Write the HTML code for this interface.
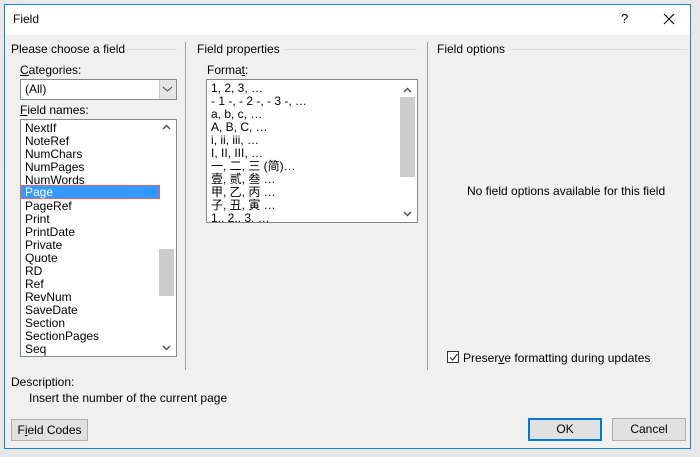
<!DOCTYPE html><html><head><style>
*{margin:0;padding:0;box-sizing:border-box}
body{width:700px;height:457px;background:#e8e8e8;position:relative;overflow:hidden;font-family:"Liberation Sans","Noto Sans CJK SC",sans-serif;font-size:12px;color:#000}
.a{position:absolute;white-space:nowrap}
.win{position:absolute;left:4px;top:4px;width:687px;height:445px;background:#f0f0f0;border:1px solid #1883d7}
.tb{position:absolute;left:5px;top:5px;width:685px;height:30px;background:#fff}
.line{position:absolute;height:1px;background:#dcdcdc}
.vl{position:absolute;width:1px;background:#a0a0a0}
.box{position:absolute;background:#fff;border:1px solid #828790}
.it{position:absolute;left:4px;line-height:13px}
.sb{position:absolute;background:#cdcdcd}
.btn{position:absolute;background:#e1e1e1;border:1px solid #adadad;text-align:center;line-height:20px}
</style></head><body>
<div class="win"></div>
<div class="tb"></div>
<div class="a" style="left:13px;top:12px;font-size:12px">Field</div>
<div class="a" style="left:621px;top:11px;font-size:13px">?</div>
<svg class="a" style="left:663px;top:13px" width="12" height="12"><path d="M1 1L11 11M11 1L1 11" stroke="#000" stroke-width="1.1"/></svg>

<div class="a" style="left:11px;top:42px">Please choose a field</div>
<div class="line" style="left:124px;top:49px;width:53px"></div>
<div class="vl" style="left:185px;top:42px;height:328px"></div>
<div class="a" style="left:197px;top:42px">Field properties</div>
<div class="line" style="left:284px;top:49px;width:133px"></div>
<div class="vl" style="left:427px;top:42px;height:328px"></div>
<div class="a" style="left:437px;top:42px">Field options</div>
<div class="line" style="left:510px;top:49px;width:177px"></div>

<div class="a" style="left:20px;top:63px"><u>C</u>ategories:</div>
<div class="box" style="left:20px;top:79px;width:157px;height:21px"><div class="it" style="top:3px">(All)</div></div>
<div class="a" style="left:159px;top:80px;width:17px;height:19px;background:#e5e5e5;border-left:1px solid #ccc"></div>
<svg class="a" style="left:162px;top:85px" width="11" height="8"><path d="M1 2L5.5 6L10 2" stroke="#444" fill="none"/></svg>

<div class="a" style="left:20px;top:103px"><u>F</u>ield names:</div>
<div class="box" style="left:20px;top:119px;width:157px;height:238px;overflow:hidden">
<div class="it" style="top:2px">NextIf</div>
<div class="it" style="top:15px">NoteRef</div>
<div class="it" style="top:28px">NumChars</div>
<div class="it" style="top:41px">NumPages</div>
<div class="it" style="top:54px">NumWords</div>
<div style="position:absolute;left:0;top:65px;width:139px;height:14px;background:#3399ff;border:1px solid #e8616c"></div>
<div class="it" style="top:66px;color:#fff">Page</div>
<div class="it" style="top:80px">PageRef</div>
<div class="it" style="top:93px">Print</div>
<div class="it" style="top:106px">PrintDate</div>
<div class="it" style="top:119px">Private</div>
<div class="it" style="top:132px">Quote</div>
<div class="it" style="top:145px">RD</div>
<div class="it" style="top:158px">Ref</div>
<div class="it" style="top:171px">RevNum</div>
<div class="it" style="top:184px">SaveDate</div>
<div class="it" style="top:197px">Section</div>
<div class="it" style="top:210px">SectionPages</div>
<div class="it" style="top:223px">Seq</div>
<div class="sb" style="left:138px;top:129px;width:15px;height:47px"></div>
<svg style="position:absolute;left:141px;top:4px" width="9" height="6"><path d="M1 5L4.5 1.5L8 5" stroke="#555" fill="none" stroke-width="1.5"/></svg>
<svg style="position:absolute;left:141px;top:225px" width="9" height="6"><path d="M1 1L4.5 4.5L8 1" stroke="#555" fill="none" stroke-width="1.5"/></svg>
</div>

<div class="a" style="left:207px;top:63px">Forma<u>t</u>:</div>
<div class="box" style="left:206px;top:79px;width:212px;height:144px;overflow:hidden">
<div class="it" style="top:2px">1, 2, 3, …</div>
<div class="it" style="top:15px">- 1 -, - 2 -, - 3 -, …</div>
<div class="it" style="top:28px">a, b, c, …</div>
<div class="it" style="top:41px">A, B, C, …</div>
<div class="it" style="top:54px">i, ii, iii, …</div>
<div class="it" style="top:67px">I, II, III, …</div>
<div class="it" style="top:80px">一, 二, 三 (简)…</div>
<div class="it" style="top:93px">壹, 贰, 叁 …</div>
<div class="it" style="top:106px">甲, 乙, 丙 …</div>
<div class="it" style="top:119px">子, 丑, 寅 …</div>
<div class="it" style="top:132px">1., 2., 3. …</div>
<div class="sb" style="left:193px;top:17px;width:15px;height:80px"></div>
<svg style="position:absolute;left:196px;top:7px" width="9" height="6"><path d="M1 5L4.5 1.5L8 5" stroke="#555" fill="none" stroke-width="1.5"/></svg>
<svg style="position:absolute;left:196px;top:131px" width="9" height="6"><path d="M1 1L4.5 4.5L8 1" stroke="#555" fill="none" stroke-width="1.5"/></svg>
</div>

<div class="a" style="left:467px;top:184px">No field options available for this field</div>

<div class="a" style="left:447px;top:351px;width:12px;height:12px;border:1px solid #333;background:#fff"></div>
<svg class="a" style="left:448px;top:352px" width="11" height="11"><path d="M2 5.5L4.5 8L9.5 2" stroke="#333" fill="none" stroke-width="1.2"/></svg>
<div class="a" style="left:463px;top:351px">Preser<u>v</u>e formatting during updates</div>

<div class="a" style="left:11px;top:375px">Description:</div>
<div class="a" style="left:29px;top:391px">Insert the number of the current page</div>

<div class="btn" style="left:11px;top:419px;width:77px;height:22px">F<u>i</u>eld Codes</div>
<div class="btn" style="left:528px;top:418px;width:74px;height:23px;border:2px solid #0078d7;line-height:19px">OK</div>
<div class="btn" style="left:612px;top:418px;width:74px;height:23px">Cancel</div>
</body></html>
